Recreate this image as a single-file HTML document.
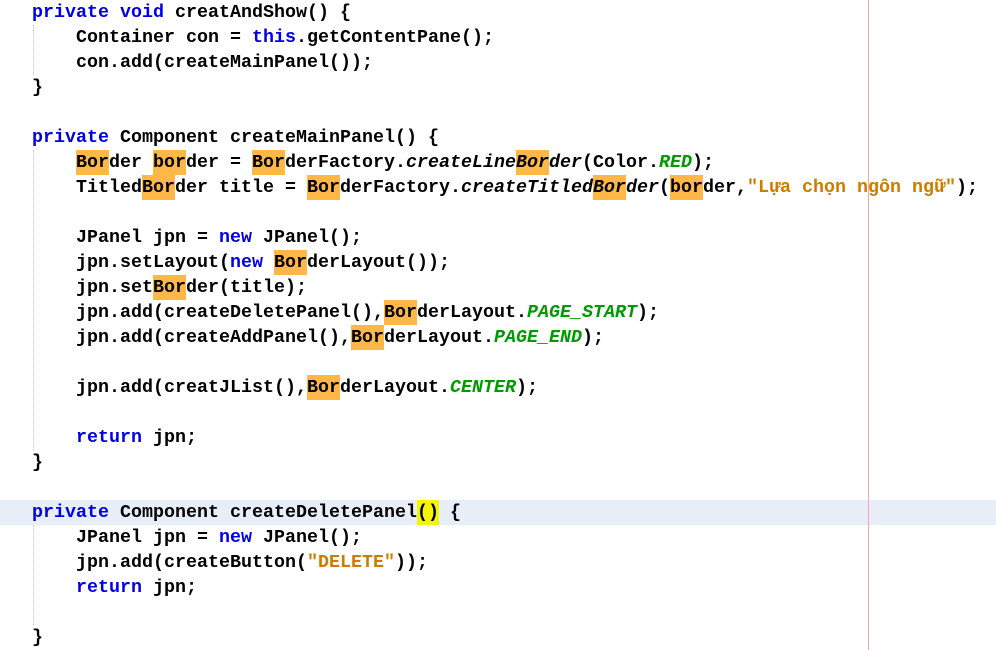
<!DOCTYPE html>
<html><head><meta charset="utf-8"><style>
html,body{margin:0;padding:0;background:#fff;width:996px;height:650px;overflow:hidden}
.ed{position:relative;width:996px;height:650px}
.l{position:absolute;left:32px;height:25px;line-height:25px;white-space:pre;font-family:"Liberation Mono",monospace;font-size:18.33px;font-weight:bold;color:#000}
.k{color:#0000e6}
.s{color:#ce7b00}
.i{font-style:italic}
.g{color:#009900;font-style:italic}
.h{background:#ffb848;display:inline-block;height:25px}
.y{background:#f5f500;display:inline-block;height:25px}
.cur{position:absolute;left:0;top:500px;width:996px;height:25px;background:#e8eef8}
.rm{position:absolute;left:868px;top:0;width:1px;height:650px;background:#f4a8a8}
.gd{position:absolute;left:33px;width:0;border-left:1px dotted #c8c8c8}
</style></head><body><div class="ed">
<div class="cur"></div>
<div class="rm"></div>
<div class="gd" style="top:25px;height:50px"></div>
<div class="gd" style="top:150px;height:300px"></div>
<div class="gd" style="top:525px;height:100px"></div>
<div class="l" style="top:0"><span class="k">private</span> <span class="k">void</span> creatAndShow() {</div>
<div class="l" style="top:25px">    Container con = <span class="k">this</span>.getContentPane();</div>
<div class="l" style="top:50px">    con.add(createMainPanel());</div>
<div class="l" style="top:75px">}</div>
<div class="l" style="top:125px"><span class="k">private</span> Component createMainPanel() {</div>
<div class="l" style="top:150px">    <span class="h">Bor</span>der <span class="h">bor</span>der = <span class="h">Bor</span>derFactory.<span class="i">createLine<span class="h">Bor</span>der</span>(Color.<span class="g">RED</span>);</div>
<div class="l" style="top:175px">    Titled<span class="h">Bor</span>der title = <span class="h">Bor</span>derFactory.<span class="i">createTitled<span class="h">Bor</span>der</span>(<span class="h">bor</span>der,<span class="s">"Lựa chọn ngôn ngữ"</span>);</div>
<div class="l" style="top:225px">    JPanel jpn = <span class="k">new</span> JPanel();</div>
<div class="l" style="top:250px">    jpn.setLayout(<span class="k">new</span> <span class="h">Bor</span>derLayout());</div>
<div class="l" style="top:275px">    jpn.set<span class="h">Bor</span>der(title);</div>
<div class="l" style="top:300px">    jpn.add(createDeletePanel(),<span class="h">Bor</span>derLayout.<span class="g">PAGE_START</span>);</div>
<div class="l" style="top:325px">    jpn.add(createAddPanel(),<span class="h">Bor</span>derLayout.<span class="g">PAGE_END</span>);</div>
<div class="l" style="top:375px">    jpn.add(creatJList(),<span class="h">Bor</span>derLayout.<span class="g">CENTER</span>);</div>
<div class="l" style="top:425px">    <span class="k">return</span> jpn;</div>
<div class="l" style="top:450px">}</div>
<div class="l" style="top:500px"><span class="k">private</span> Component createDeletePanel<span class="y">()</span> {</div>
<div class="l" style="top:525px">    JPanel jpn = <span class="k">new</span> JPanel();</div>
<div class="l" style="top:550px">    jpn.add(createButton(<span class="s">"DELETE"</span>));</div>
<div class="l" style="top:575px">    <span class="k">return</span> jpn;</div>
<div class="l" style="top:625px">}</div>
</div></body></html>
